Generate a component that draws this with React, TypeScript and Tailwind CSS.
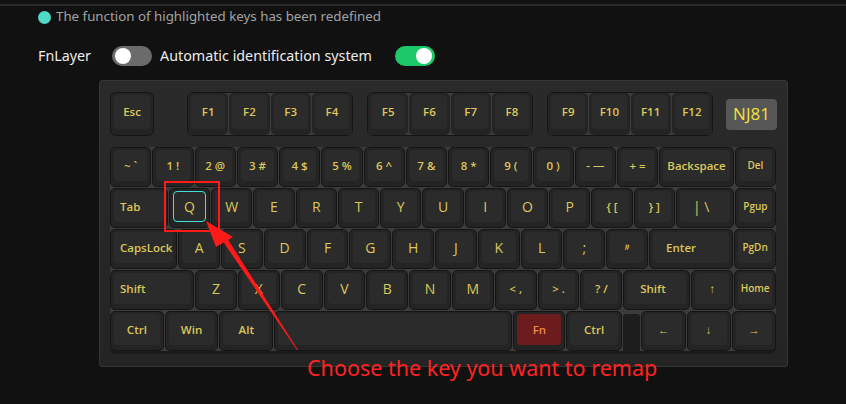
import clsx from "clsx";

type KeyDef = {
  label: string;
  u?: number;
  size?: "sm" | "md" | "lg";
  align?: "left" | "inset";
  mark?: "cyan" | "fn";
  blank?: boolean;
};

// flex-grow per key width in units
const GROW: Record<string, string> = {
  "1": "grow",
  "0.99": "grow-[0.99]",
  "1.2": "grow-[1.2]",
  "1.25": "grow-[1.25]",
  "1.3": "grow-[1.3]",
  "1.5": "grow-[1.5]",
  "1.75": "grow-[1.75]",
  "2": "grow-[2]",
  "2.25": "grow-[2.25]",
  "6.3": "grow-[6.3]",
};

const SIZE = {
  sm: "text-[10px] font-semibold",
  md: "text-[11.5px] font-semibold",
  lg: "text-[14px] font-medium",
};

const letters = (s: string): KeyDef[] => s.split("").map((c) => ({ label: c, size: "lg" }));

const ROWS: KeyDef[][] = [
  [
    ...["~ `", "1 !", "2 @", "3 #", "4 $", "5 %", "6 ^", "7 &", "8 *", "9 (", "0 )", "- —", "+ ="].map(
      (label): KeyDef => ({ label }),
    ),
    { label: "Backspace", u: 2 },
    { label: "Del", size: "sm" },
  ],
  [
    { label: "Tab", u: 1.5, align: "left" },
    { label: "Q", size: "lg", mark: "cyan" },
    ...letters("WERTYUIOP"),
    { label: "{ [" },
    { label: "} ]" },
    { label: "| \\", u: 1.5, align: "inset", size: "lg" },
    { label: "Pgup", size: "sm" },
  ],
  [
    { label: "CapsLock", u: 1.75, align: "left" },
    ...letters("ASDFGHJKL"),
    { label: ";", size: "lg" },
    { label: "〃", size: "sm" },
    { label: "Enter", u: 2.25, align: "inset" },
    { label: "PgDn", size: "sm" },
  ],
  [
    { label: "Shift", u: 2.25, align: "left" },
    ...letters("ZXCVBNM"),
    { label: "< ," },
    { label: "> ." },
    { label: "? /" },
    { label: "Shift", u: 1.75, align: "inset" },
    { label: "↑" },
    { label: "Home", size: "sm" },
  ],
  [
    { label: "Ctrl", u: 1.25 },
    { label: "Win", u: 1.25 },
    { label: "Alt", u: 1.25 },
    { label: "", u: 6.3 },
    { label: "Fn", u: 1.2, mark: "fn" },
    { label: "Ctrl", u: 1.3 },
    { label: "", blank: true },
    { label: "←", u: 0.99 },
    { label: "↓", u: 0.99 },
    { label: "→", u: 0.99 },
  ],
];

function Key({ k }: { k: KeyDef }) {
  if (k.blank) {
    return <div className="grow-[0.48] basis-0 self-end h-[37px] rounded-t-[3px] bg-[#1d1d1d]" />;
  }
  return (
    <div
      className={clsx(
        "flex min-w-0 basis-0 rounded-[5px] border border-[#151515] bg-[#242424] px-[3px] pt-[2px] pb-[5px]",
        GROW[String(k.u ?? 1)],
      )}
    >
      <div
        className={clsx(
          "flex flex-1 items-center rounded-[4px] whitespace-nowrap",
          k.align === "left" ? "pl-[6px]" : k.align === "inset" ? "pl-[13px]" : "justify-center",
          k.mark === "fn"
            ? "bg-[#6c1c1c] text-[#ee8a4c]"
            : k.mark === "cyan"
              ? "border border-[#3fe3d3] bg-[#2b2b2b] text-[#dcc75a]"
              : "bg-[#2b2b2b] text-[#dcc75a]",
          SIZE[k.size ?? "md"],
        )}
      >
        {k.label}
      </div>
    </div>
  );
}

function FGroup({ labels }: { labels: string[] }) {
  return (
    <div className="flex w-[166px] gap-px rounded-[6px] border border-[#151515] bg-[#3b3b3b]">
      {labels.map((l) => (
        <div key={l} className="flex grow basis-0 rounded-[5px] bg-[#242424] px-[3px] pt-[2px] pb-[6px]">
          <div className="flex flex-1 items-center justify-center rounded-[4px] bg-[#2b2b2b] text-[11.5px] font-semibold text-[#dcc75a]">
            {l}
          </div>
        </div>
      ))}
    </div>
  );
}

function Toggle({ on }: { on: boolean }) {
  return (
    <div
      className={clsx(
        "flex h-[20px] w-[40px] items-center rounded-full px-[3px]",
        on ? "justify-end bg-[#1cc86a]" : "justify-start bg-[#6b6b6b]",
      )}
    >
      <div className="h-[16px] w-[16px] rounded-full bg-white" />
    </div>
  );
}

export default function App() {
  return (
    <div className="relative h-[404px] w-[846px] overflow-hidden bg-[#111111] font-['Noto_Sans',sans-serif]">
      <div className="mt-[4px] h-[2px] bg-[#2a2a2a]" />

      <div className="mt-[1px] flex h-[20px] items-center pl-[38px]">
        <span className="h-[13px] w-[13px] rounded-full bg-[#4fd8c5]" />
        <span className="ml-[5px] text-[13.3px] text-[#a3a3a3]">The function of highlighted keys has been redefined</span>
      </div>

      <div className="mt-[18px] flex h-[22px] items-center pl-[38px] text-[14.3px] text-[#ececec]">
        <span>FnLayer</span>
        <div className="ml-[21px]">
          <Toggle on={false} />
        </div>
        <span className="ml-[8px]">Automatic identification system</span>
        <div className="ml-[23px]">
          <Toggle on />
        </div>
      </div>

      <div className="mt-[13px] ml-[99px] h-[287px] w-[689px] rounded-[3px] border border-[#363636] bg-gradient-to-b from-[#2a2a2a] to-[#242424] pt-[11px] pl-[10px] font-['Open_Sans',sans-serif]">
        <div className="flex h-[44px] items-stretch">
          <div className="flex w-[44px] rounded-[6px] border border-[#151515] bg-[#242424] px-[3px] pt-[2px] pb-[6px]">
            <div className="flex flex-1 items-center justify-center rounded-[4px] bg-[#2b2b2b] text-[11.5px] font-semibold text-[#dcc75a]">
              Esc
            </div>
          </div>
          <div className="ml-[33px] flex">
            <FGroup labels={["F1", "F2", "F3", "F4"]} />
          </div>
          <div className="ml-[14px] flex">
            <FGroup labels={["F5", "F6", "F7", "F8"]} />
          </div>
          <div className="ml-[14px] flex">
            <FGroup labels={["F9", "F10", "F11", "F12"]} />
          </div>
          <div className="ml-[13px] flex items-center">
            <div className="flex h-[31px] w-[51px] items-center justify-center rounded-[4px] bg-[#575757] text-[17px] text-[#f2e23a]">
              NJ81
            </div>
          </div>
        </div>

        <div className="mt-[11px] flex w-[666px] flex-col gap-px rounded-[6px] bg-[#3b3b3b] shadow-[0_3px_0_#1b1b1b]">
          {ROWS.map((row, i) => (
            <div key={i} className="flex h-[40px] gap-px">
              {row.map((k, j) => (
                <Key key={j} k={k} />
              ))}
            </div>
          ))}
        </div>
      </div>

      {/* annotation */}
      <div className="absolute top-[181px] left-[164px] h-[51px] w-[56px] border-2 border-[#ff1a1a]" />
      <svg className="absolute top-0 left-0" width="846" height="404" viewBox="0 0 846 404">
        <polygon points="206,221 233,237 216,247" fill="#ff1a1a" />
        <polygon points="222,240 227,238 298,350 297,350" fill="#ff1a1a" />
      </svg>
      <div className="absolute top-[357px] left-[307px] text-[21.5px] leading-none whitespace-nowrap text-[#ff2222]">
        Choose the key you want to remap
      </div>
    </div>
  );
}
